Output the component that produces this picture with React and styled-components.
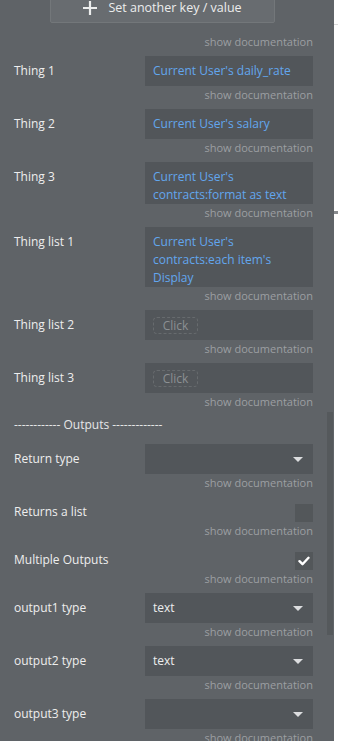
import React from 'react';
import styled, { createGlobalStyle } from 'styled-components';

const GlobalStyle = createGlobalStyle`
	html, body {
		margin: 0;
		padding: 0;
		background: #ffffff;
	}
	body {
		font-family: "Open Sans", "Liberation Sans", sans-serif;
		-webkit-font-smoothing: antialiased;
	}
`;

const Page = styled.div`
	display: flex;
	width: 338px;
	height: 741px;
	overflow: hidden;
`;

const Panel = styled.div`
	position: relative;
	width: 334px;
	height: 741px;
	box-sizing: border-box;
	padding: 0 21px 0 14px;
	background: #5f6367;
	overflow: hidden;
`;

const Strip = styled.div`
	display: flex;
	flex-direction: column;
	width: 4px;
	background: #ffffff;
`;

const StripLine = styled.div`
	margin-top: ${(p) => p.top}px;
	height: ${(p) => p.size}px;
	background: ${(p) => p.color};
`;

const AddButton = styled.button`
	display: flex;
	align-items: center;
	justify-content: center;
	gap: 11px;
	width: 225px;
	height: 31px;
	margin: -8px 0 0 36px;
	padding: 0;
	box-sizing: border-box;
	background: #686c70;
	border: 1px solid #73777a;
	border-radius: 2px;
	color: #eceded;
	font-family: inherit;
	font-size: 12.5px;
	line-height: 18px;
`;

const Doc = styled.div`
	margin: 1px 0 6px;
	text-align: right;
	font-size: 11px;
	line-height: 16px;
	color: #9c9fa2;
	&:first-of-type {
		margin-top: 11px;
	}
`;

const Row = styled.div`
	display: flex;
	align-items: flex-start;
	padding-top: ${(p) => (p.check ? 6 : 0)}px;
`;

const Label = styled.div`
	flex: 1;
	padding-top: ${(p) => (p.check ? 0 : 6)}px;
	font-size: 12px;
	line-height: 18px;
	color: #eeeeee;
`;

const Field = styled.div`
	width: 168px;
	min-height: 30px;
	box-sizing: border-box;
	padding: 6px 8px 0;
	background: #52565a;
	font-size: 12px;
	line-height: 18px;
	color: ${(p) => (p.blue ? '#62a6ee' : '#eeeeee')};
`;

const Select = styled(Field)`
	display: flex;
	align-items: flex-start;
	justify-content: space-between;
	padding-right: 10px;
`;

const Caret = styled.span`
	margin-top: 7px;
	width: 0;
	height: 0;
	border-left: 5px solid transparent;
	border-right: 5px solid transparent;
	border-top: 5px solid #dcdddf;
`;

const ClickSlot = styled.div`
	display: flex;
	align-items: center;
	justify-content: center;
	width: 45px;
	height: 17px;
	margin-top: 1px;
	box-sizing: border-box;
	border: 1px dashed #676b6e;
	border-radius: 4px;
	color: #8c9093;
	font-size: 12px;
`;

const Box = styled.div`
	display: flex;
	align-items: center;
	justify-content: center;
	width: 18px;
	height: 18px;
	margin-top: 1px;
	background: #53575a;
`;

const Heading = styled.div`
	margin-bottom: 10px;
	font-size: 12px;
	line-height: 18px;
	color: #e6e7e8;
	white-space: pre;
`;

const Scrollbar = styled.div`
	position: absolute;
	right: 1px;
	top: 412px;
	width: 6px;
	height: 223px;
	background: #55595c;
`;

const Plus = () => (
	<svg width="14" height="14" viewBox="0 0 14 14">
		<path d="M7 0v14M0 7h14" stroke="#eceded" strokeWidth="2.2" />
	</svg>
);

const Check = () => (
	<svg width="12" height="10" viewBox="0 0 12 10">
		<path d="M1.5 5.2l3 3L10.5 1.8" fill="none" stroke="#ffffff" strokeWidth="2.4" strokeLinecap="round" strokeLinejoin="round" />
	</svg>
);

const inputs = [
	{ label: 'Thing 1', value: "Current User's daily_rate" },
	{ label: 'Thing 2', value: "Current User's salary" },
	{ label: 'Thing 3', value: "Current User's contracts:format as text" },
	{ label: 'Thing list 1', value: "Current User's contracts:each item's Display" },
	{ label: 'Thing list 2' },
	{ label: 'Thing list 3' },
];

const outputs = [
	{ label: 'output1 type', value: 'text' },
	{ label: 'output2 type', value: 'text' },
	{ label: 'output3 type', value: '' },
];

const App = () => {
	return (
		<Page>
			<GlobalStyle />
			<Panel>
				<AddButton>
					<Plus />
					<span>Set another key / value</span>
				</AddButton>
				<Doc>show documentation</Doc>

				{inputs.map((item) => (
					<React.Fragment key={item.label}>
						<Row>
							<Label>{item.label}</Label>
							<Field blue>
								{item.value ? item.value : <ClickSlot>Click</ClickSlot>}
							</Field>
						</Row>
						<Doc>show documentation</Doc>
					</React.Fragment>
				))}

				<Heading>------------ Outputs -------------</Heading>

				<Row>
					<Label>Return type</Label>
					<Select>
						<span></span>
						<Caret />
					</Select>
				</Row>
				<Doc>show documentation</Doc>

				<Row check>
					<Label check>Returns a list</Label>
					<Box />
				</Row>
				<Doc>show documentation</Doc>

				<Row check>
					<Label check>Multiple Outputs</Label>
					<Box>
						<Check />
					</Box>
				</Row>
				<Doc>show documentation</Doc>

				{outputs.map((item) => (
					<React.Fragment key={item.label}>
						<Row>
							<Label>{item.label}</Label>
							<Select>
								<span>{item.value}</span>
								<Caret />
							</Select>
						</Row>
						<Doc>show documentation</Doc>
					</React.Fragment>
				))}

				<Scrollbar />
			</Panel>
			<Strip>
				<StripLine top={24} size={1} color="#dcdcdc" />
				<StripLine top={186} size={3} color="#8a8d90" />
			</Strip>
		</Page>
	);
};

export default App;
